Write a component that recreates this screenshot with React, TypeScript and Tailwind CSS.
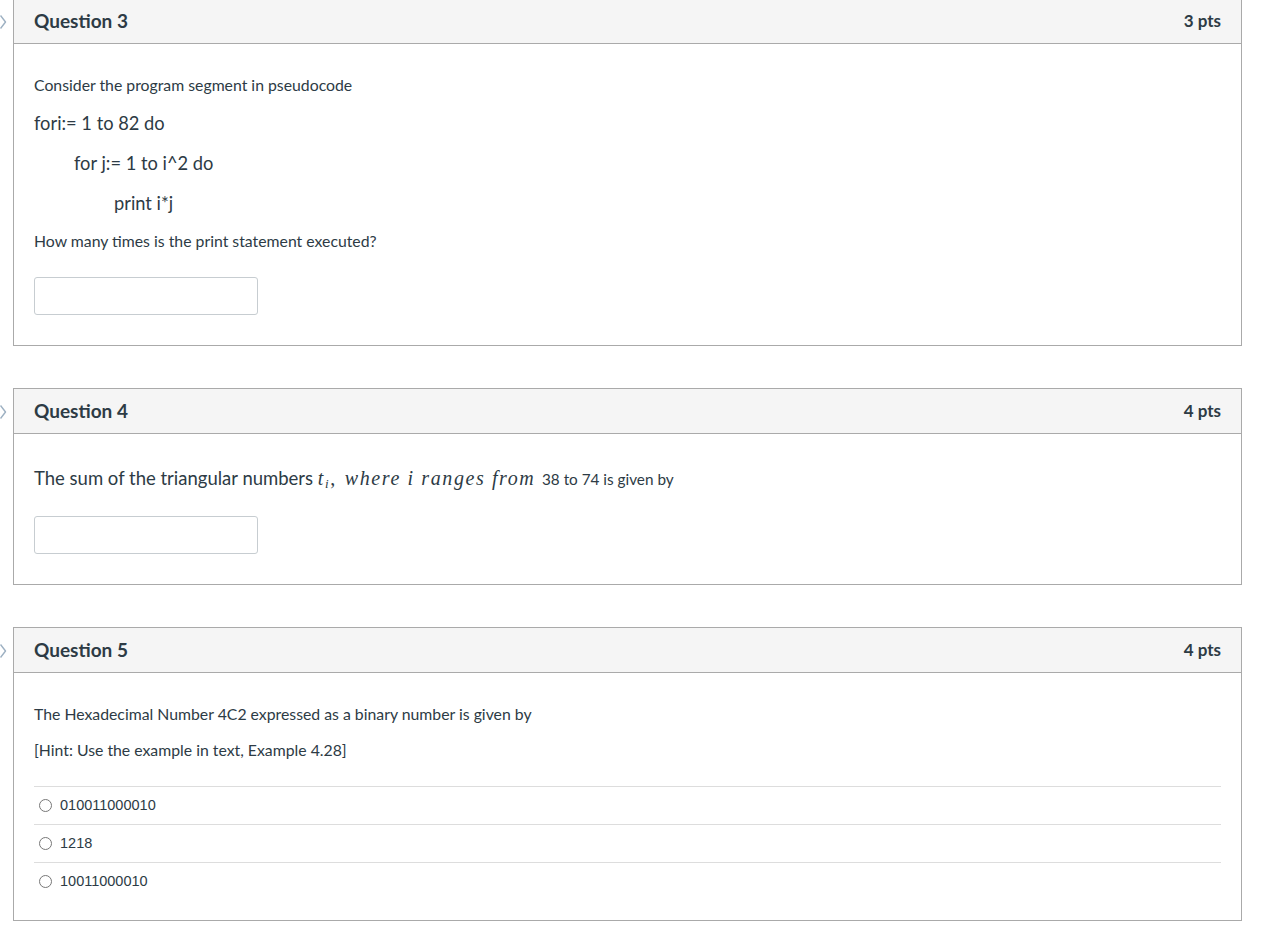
import * as React from 'react';

const lato = { fontFamily: 'Lato, "Noto Sans", sans-serif' };

function Marker() {
  return (
    <svg className="absolute -left-[14px] top-[15px]" width="8" height="16" viewBox="0 0 8 16" fill="none">
      <path d="M0.5 1.5 L5.5 8 L0.5 14.5" stroke="#9db0c2" strokeWidth="1.4" strokeLinejoin="round" />
    </svg>
  );
}

function Question({
  title,
  pts,
  children,
  clipTop,
}: {
  title: string;
  pts: string;
  children: React.ReactNode;
  clipTop?: boolean;
}) {
  return (
    <div className={`relative ml-[13px] w-[1229px] border border-[#aaaaaa] ${clipTop ? '-mt-[2px]' : ''}`}>
      <Marker />
      <div className="flex h-[45px] items-center justify-between border-b border-[#aaaaaa] bg-[#f5f5f5] px-5">
        <h2 className="text-[19px] font-bold text-[#2d3b45]">{title}</h2>
        <span className="text-[17px] font-bold text-[#2d3b45]">{pts}</span>
      </div>
      <div className="px-5 pt-[31px] pb-[30px] text-[#2d3b45]">{children}</div>
    </div>
  );
}

function AnswerBox() {
  return <div className="h-[38px] w-[224px] rounded-[3px] border border-[#c7cdd1] bg-white" />;
}

function Option({ label }: { label: string }) {
  return (
    <div className="flex h-[38px] items-center gap-[8px] border-t border-[#dddddd] pl-[5px]">
      <span className="h-[13px] w-[13px] rounded-full border border-[#777777] bg-white" />
      <span className="text-[14.5px] text-[#2d3b45]" style={{ fontFamily: '"Liberation Sans", Arial, sans-serif' }}>
        {label}
      </span>
    </div>
  );
}

export default function App() {
  return (
    <div className="min-h-[943px] w-[1271px] overflow-hidden bg-white" style={lato}>
      <Question title="Question 3" pts="3 pts" clipTop>
        <p className="-mt-px text-[15.8px] leading-[21px]">Consider the program segment in pseudocode</p>
        <p className="mt-[16px] text-[18.3px] leading-[25px]">fori:= 1 to 82 do</p>
        <p className="mt-[15px] pl-10 text-[18.3px] leading-[25px]">for j:= 1 to i^2 do</p>
        <p className="mt-[15px] pl-20 text-[18.3px] leading-[25px]">print i*j</p>
        <p className="mt-[14px] text-[15.8px] leading-[21px]">How many times is the print statement executed?</p>
        <div className="mt-[26px]">
          <AnswerBox />
        </div>
      </Question>

      <div className="h-[42px]" />

      <Question title="Question 4" pts="4 pts">
        <p className="flex items-baseline whitespace-pre text-[18.5px] leading-[27px]">
          <span>The sum of the triangular numbers </span>
          <span
            className="text-[20px] italic tracking-[1.6px]"
            style={{ fontFamily: '"Liberation Serif", "DejaVu Serif", serif' }}
          >
            t<sub className="text-[13px]">i</sub>
            <span className="not-italic">,</span>
            <span className="ml-[8px]">where i ranges from</span>{' '}
          </span>
          <span className="text-[15.3px]">38 to 74 is given by</span>
        </p>
        <div className="mt-[23px]">
          <AnswerBox />
        </div>
      </Question>

      <div className="h-[42px]" />

      <Question title="Question 5" pts="4 pts">
        <p className="-mt-px text-[15.8px] leading-[21px]">The Hexadecimal Number 4C2 expressed as a binary number is given by</p>
        <p className="mt-[15px] text-[15.8px] leading-[21px]">[Hint: Use the example in text, Example 4.28]</p>
        <div className="mt-[26px] -mb-[10px]">
          <Option label="010011000010" />
          <Option label="1218" />
          <Option label="10011000010" />
        </div>
      </Question>
    </div>
  );
}
